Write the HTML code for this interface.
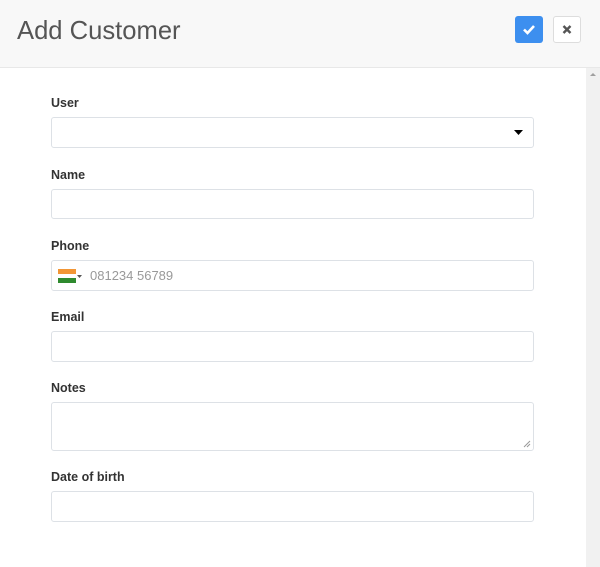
<!DOCTYPE html>
<html><head><style>
body{margin:0;width:600px;height:567px;overflow:hidden;background:#fff;font-family:"Liberation Sans",sans-serif;position:relative}
.hdr{position:absolute;left:0;top:0;width:600px;height:67px;background:#f8f8f8;border-bottom:1px solid #e8e8e8}
.hdr h1{position:absolute;left:17px;top:17px;margin:0;font-weight:normal;font-size:25.6px;color:#555}
.b{position:absolute;top:16px;width:28px;height:27px;border-radius:3px;box-sizing:border-box}
.sb{position:absolute;left:586px;top:68px;width:14px;height:499px;background:#f1f1f1}
.lbl{position:absolute;left:51px;font-size:12.5px;font-weight:bold;color:#333}
.in{position:absolute;left:51px;width:483px;border:1px solid #dde1e6;border-radius:3px;box-sizing:border-box;background:#fff}
</style></head><body>
<div class="hdr"><h1>Add Customer</h1>
<div class="b" style="left:515px;background:#3d8fef"><svg width="28" height="27"><path d="M9 13.5l3.5 3.5 6.5-7" stroke="#fff" stroke-width="2.6" fill="none"/></svg></div>
<div class="b" style="left:553px;background:#fff;border:1px solid #ddd"><svg width="26" height="25"><path d="M9.5 9l7 7M16.5 9l-7 7" stroke="#555" stroke-width="2.4"/></svg></div>
</div>
<div class="sb"><svg width="14" height="14"><path d="M4 8h6l-3-3z" fill="#a0a0a0"/></svg></div>
<div class="lbl" style="top:96px">User</div>
<div class="in" style="top:117px;height:31px"><svg style="position:absolute;right:9px;top:12px" width="10" height="6"><path d="M0 0h9l-4.5 5z" fill="#000"/></svg></div>
<div class="lbl" style="top:168px">Name</div>
<div class="in" style="top:189px;height:30px"></div>
<div class="lbl" style="top:239px">Phone</div>
<div class="in" style="top:260px;height:31px">
<div style="position:absolute;left:6px;top:8px;width:18px;height:14px"><div style="height:5px;background:#f29636"></div><div style="height:4px;background:#fff"></div><div style="height:5px;background:#2f8a2f"></div></div>
<svg style="position:absolute;left:25px;top:14px" width="6" height="4"><path d="M0 0h5l-2.5 3z" fill="#555"/></svg>
<span style="position:absolute;left:38px;top:7px;font-size:13px;color:#999">081234 56789</span></div>
<div class="lbl" style="top:310px">Email</div>
<div class="in" style="top:331px;height:31px"></div>
<div class="lbl" style="top:381px">Notes</div>
<div class="in" style="top:402px;height:49px"><svg style="position:absolute;right:2px;bottom:2px" width="8" height="8"><path d="M7 1L1 7M7 4L4 7" stroke="#999"/></svg></div>
<div class="lbl" style="top:470px">Date of birth</div>
<div class="in" style="top:491px;height:31px"></div>
</body></html>
